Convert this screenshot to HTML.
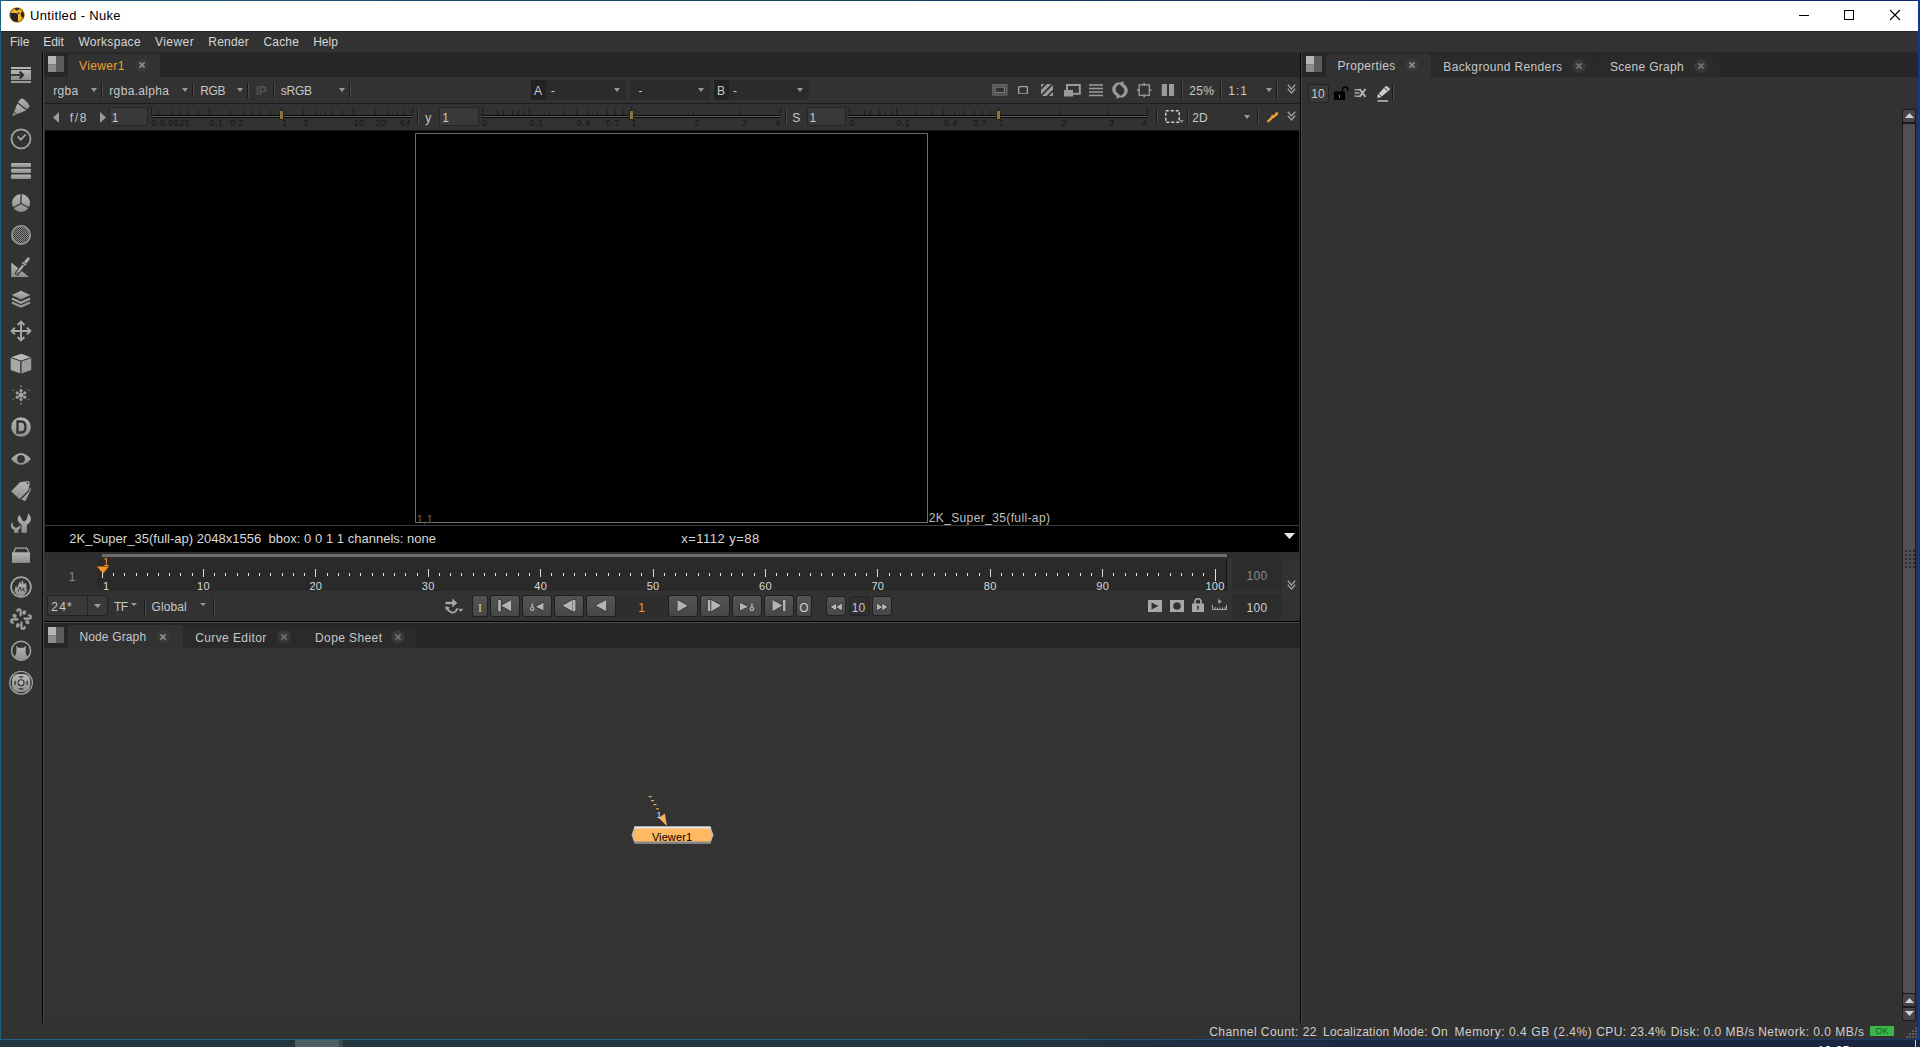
<!DOCTYPE html><html><head><meta charset="utf-8"><style>
html,body{margin:0;padding:0;width:1920px;height:1047px;overflow:hidden;background:#323232;}
body{position:relative;font-family:"Liberation Sans",sans-serif;}
div{position:absolute;box-sizing:border-box;}
.t{white-space:nowrap;line-height:1;}
</style></head><body>
<div style="left:0px;top:0px;width:1920px;height:1047px;background:#323232;"></div>
<div style="left:0px;top:0px;width:1920px;height:31px;background:#ffffff;"></div>
<div style="left:0px;top:0px;width:1920px;height:1px;background:linear-gradient(90deg,#1d5b7a 0%,#14405f 45%,#0c2f6a 75%,#0b2d7a 100%);"></div>
<div style="left:0px;top:1039px;width:1920px;height:8px;background:linear-gradient(90deg,#22363f 0%,#22363f 52%,#1b2743 73%,#1a2541 100%);"></div>
<div style="left:0px;top:1039px;width:1920px;height:1px;background:linear-gradient(90deg,#1f6484 0%,#1f6484 52%,#1d3a6a 73%,#1c3670 100%);"></div>
<div style="left:1915px;top:1040px;width:1px;height:7px;background:#c8ccd8;"></div>
<div class="t" style="left:1817.5px;top:1045.00px;font-size:12px;color:#ffffff;letter-spacing:0.5px">10:05</div>
<div style="left:295px;top:1040px;width:44px;height:7px;background:#4f5f66;"></div>
<div style="left:339px;top:1040px;width:4px;height:7px;background:#3a4a52;"></div>
<div style="left:0px;top:0px;width:1px;height:1040px;background:#1d6080;"></div>
<div style="left:1918px;top:0px;width:2px;height:1040px;background:#0b3a96;"></div>
<svg style="position:absolute;left:9px;top:7px;" width="16" height="16" viewBox="0 0 16 16"><circle cx="8" cy="8" r="7.8" fill="#f7b52c"/><circle cx="8" cy="8" r="6.9" fill="none" stroke="#3a3020" stroke-width="0.7"/><path d="M1.2 6H7.5L9 7.5V14.8Q5 15 3 12.8Q1.2 10.5 1.2 6Z" fill="#262626"/><path d="M5.2 1.3H10.8L8.8 3.6H7.4Z" fill="#262626"/><path d="M12.6 4.3L14.7 6Q15.3 8.5 14.8 10.5H12.6L11.6 7.5Z" fill="#262626"/><circle cx="9.6" cy="6.2" r="0.9" fill="#262626"/></svg>
<div class="t" style="left:30px;top:9.00px;font-size:13px;color:#000000;letter-spacing:0.33px">Untitled - Nuke</div>
<div style="left:1799px;top:15px;width:10px;height:1px;background:#000;"></div>
<div style="left:1844px;top:10px;width:10px;height:10px;background:transparent;border:1px solid #000"></div>
<svg style="position:absolute;left:1889px;top:9px;" width="12" height="12" viewBox="0 0 12 12"><path d="M1 1L11 11M11 1L1 11" stroke="#000" stroke-width="1.1"/></svg>
<div style="left:1px;top:31px;width:1917px;height:21px;background:#323232;"></div>
<div style="left:1px;top:31px;width:1917px;height:1px;background:#262626;"></div>
<div style="left:1px;top:52px;width:1917px;height:1px;background:#2c2c2c;"></div>
<div class="t" style="left:10px;top:36.00px;font-size:12px;color:#d6d6d6;letter-spacing:0px">File</div>
<div class="t" style="left:43.2px;top:36.00px;font-size:12px;color:#d6d6d6;letter-spacing:0px">Edit</div>
<div class="t" style="left:78.4px;top:36.00px;font-size:12px;color:#d6d6d6;letter-spacing:0.3px">Workspace</div>
<div class="t" style="left:155px;top:36.00px;font-size:12px;color:#d6d6d6;letter-spacing:0.45px">Viewer</div>
<div class="t" style="left:208.3px;top:36.00px;font-size:12px;color:#d6d6d6;letter-spacing:0.2px">Render</div>
<div class="t" style="left:263.4px;top:36.00px;font-size:12px;color:#d6d6d6;letter-spacing:0.2px">Cache</div>
<div class="t" style="left:313.2px;top:36.00px;font-size:12px;color:#d6d6d6;letter-spacing:0px">Help</div>
<div style="left:1px;top:52px;width:41px;height:971px;background:#323232;"></div>
<div style="left:42px;top:53px;width:1px;height:970px;background:#000;"></div>
<div style="left:43px;top:53px;width:1px;height:970px;background:#4a4a4a;"></div>
<svg width="0" height="0" style="position:absolute"><defs><linearGradient id="ig" x1="0" y1="0" x2="0" y2="1"><stop offset="0" stop-color="#b6b6b6"/><stop offset="1" stop-color="#8e8e8e"/></linearGradient><pattern id="dots" width="2" height="2" patternUnits="userSpaceOnUse"><rect width="2" height="2" fill="#8a8a8a"/><rect width="1" height="1" fill="#3a3a3a"/><rect x="1" y="1" width="1" height="1" fill="#3a3a3a"/></pattern></defs></svg>
<svg style="position:absolute;left:9px;top:63px;" width="24" height="24" viewBox="0 0 24 24"><rect x="2" y="4" width="20" height="2" fill="#b4b4b4"/><rect x="2" y="7" width="20" height="10" fill="url(#ig)"/><rect x="2" y="18" width="20" height="2" fill="#9a9a9a"/><path d="M2 12H13.5" stroke="#323232" stroke-width="1.8"/><path d="M10.6 8.6L14 12L10.6 15.4" fill="none" stroke="#323232" stroke-width="2.2"/></svg>
<svg style="position:absolute;left:9px;top:94.6px;" width="24" height="24" viewBox="0 0 24 24"><path d="M8.8 7.2L12.6 3.3Q17.6 5.2 20.8 11.2L17.8 14.5Z" fill="url(#ig)"/><path d="M8.4 8.4L17.2 15.6L8.3 19L3.2 21.2L5.2 16.6Z" fill="url(#ig)"/><path d="M5 16.9L7.6 19.1" stroke="#323232" stroke-width="0.9"/></svg>
<svg style="position:absolute;left:9px;top:127px;" width="24" height="24" viewBox="0 0 24 24"><circle cx="12" cy="11.9" r="9.5" fill="none" stroke="#a4a4a4" stroke-width="1.7"/><path d="M8.7 9.4L11.8 12.6L16.7 7.5" fill="none" stroke="#a8a8a8" stroke-width="1.8"/></svg>
<svg style="position:absolute;left:9px;top:159px;" width="24" height="24" viewBox="0 0 24 24"><rect x="2" y="4" width="20" height="4.2" rx="1.2" fill="url(#ig)"/><rect x="2" y="9.8" width="20" height="4.2" rx="1.2" fill="url(#ig)"/><rect x="2" y="15.6" width="20" height="4.3" rx="1.2" fill="url(#ig)"/></svg>
<svg style="position:absolute;left:9px;top:191px;" width="24" height="24" viewBox="0 0 24 24"><circle cx="12" cy="12" r="9" fill="url(#ig)"/><path d="M12 3V12.5M12 12.5L4.2 16.8M12 12.5L19.8 16.8" stroke="#323232" stroke-width="1.3"/></svg>
<svg style="position:absolute;left:9px;top:223px;" width="24" height="24" viewBox="0 0 24 24"><circle cx="12" cy="12" r="9.2" fill="url(#dots)" stroke="#9a9a9a" stroke-width="1.6"/></svg>
<svg style="position:absolute;left:9px;top:255.5px;" width="24" height="24" viewBox="0 0 24 24"><path d="M2.25 6.5V20.9H20Z" fill="url(#ig)"/><path d="M8.1 17.3L18.6 3.5" stroke="#323232" stroke-width="4.4" stroke-linecap="round"/><path d="M8.1 17.3L18.6 3.5" stroke="#a8a8a8" stroke-width="2.4" stroke-linecap="round"/><path d="M12.9 6.1L17.3 9.5" stroke="#323232" stroke-width="3.6"/><path d="M13.2 6.4L17 9.2" stroke="#a8a8a8" stroke-width="1.8"/><path d="M16.8 6L19.2 2.8" stroke="#a8a8a8" stroke-width="3" stroke-linecap="round"/><circle cx="8.4" cy="16.9" r="0.8" fill="#323232"/></svg>
<svg style="position:absolute;left:9px;top:288px;" width="24" height="24" viewBox="0 0 24 24"><path d="M12 2.8L21.3 7.1L12 11.4L2.7 7.1Z" fill="url(#ig)"/><path d="M2.9 10.6L12 14.8L21.1 10.6" fill="none" stroke="#a0a0a0" stroke-width="2.2"/><path d="M2.9 14.4L12 18.6L21.1 14.4" fill="none" stroke="#989898" stroke-width="2.2"/></svg>
<svg style="position:absolute;left:9px;top:319px;" width="24" height="24" viewBox="0 0 24 24"><path d="M12 3V21M3 12H21" stroke="#a8a8a8" stroke-width="1.9"/><path d="M8.6 6L12 2.6L15.4 6M8.6 18L12 21.4L15.4 18M6 8.6L2.6 12L6 15.4M18 8.6L21.4 12L18 15.4" fill="none" stroke="#a8a8a8" stroke-width="1.9"/></svg>
<svg style="position:absolute;left:9px;top:351px;" width="24" height="24" viewBox="0 0 24 24"><path d="M1.7 6.2L12.5 2.7L22.2 6.4L11.8 10Z" fill="#b8b8b8"/><path d="M1.7 6.6L11.5 10.3V22.4L1.7 19Z" fill="#a8a8a8"/><path d="M12.3 10.3L22.2 6.8V18.9L12.3 22.4Z" fill="#9c9c9c"/><path d="M1.7 6.5L11.9 10.1L22.2 6.6M11.9 10.1V22.4" fill="none" stroke="#2e2e2e" stroke-width="0.9"/></svg>
<svg style="position:absolute;left:9px;top:383px;" width="24" height="24" viewBox="0 0 24 24"><circle cx="12" cy="12" r="2.5" fill="#a8a8a8"/><circle cx="12" cy="7.6" r="1.6" fill="#a0a0a0"/><circle cx="12" cy="16.4" r="1.6" fill="#a0a0a0"/><circle cx="8.2" cy="9.8" r="1.6" fill="#a0a0a0"/><circle cx="15.8" cy="9.8" r="1.6" fill="#a0a0a0"/><circle cx="8.2" cy="14.2" r="1.6" fill="#a0a0a0"/><circle cx="15.8" cy="14.2" r="1.6" fill="#a0a0a0"/><rect x="11.2" y="2.6" width="1.6" height="1.6" fill="#888"/><rect x="11.2" y="19.8" width="1.6" height="1.6" fill="#888"/><circle cx="4.2" cy="7.3" r="0.8" fill="#888"/><circle cx="19.8" cy="7.3" r="0.8" fill="#888"/><circle cx="4.2" cy="16.7" r="0.8" fill="#888"/><circle cx="19.8" cy="16.7" r="0.8" fill="#888"/></svg>
<svg style="position:absolute;left:9px;top:415px;" width="24" height="24" viewBox="0 0 24 24"><circle cx="12" cy="12" r="9.8" fill="url(#ig)"/><path d="M8.5 6.5H12.2Q16.5 6.5 16.5 12Q16.5 17.5 12.2 17.5H8.5Z" fill="none" stroke="#323232" stroke-width="2.4"/></svg>
<svg style="position:absolute;left:9px;top:447px;" width="24" height="24" viewBox="0 0 24 24"><path d="M2 12Q12 0.5 22 12Q12 23.5 2 12Z" fill="url(#ig)"/><circle cx="12" cy="12" r="3.9" fill="#323232"/></svg>
<svg style="position:absolute;left:9px;top:479px;" width="24" height="24" viewBox="0 0 24 24"><path d="M2.15 12.2L11 3.3L19.6 1.9L20.8 3.9L19.3 11.6L10.5 20.2Z" fill="url(#ig)"/><path d="M21 8.2L21.9 10.7L16.5 21.9L12.2 20.5L20 12.6Z" fill="#a0a0a0"/><circle cx="18.5" cy="3.9" r="1" fill="#323232"/></svg>
<svg style="position:absolute;left:9px;top:511px;" width="24" height="24" viewBox="0 0 24 24"><path d="M10.2 4Q8.2 6.5 8.8 9.5Q9.6 12 12.5 13.8V21.7H17.9V13.8Q21.2 12 21.9 9Q22.3 5.5 19.3 2.2L18.5 6Q17.5 10 15.3 10.2Q13 10 12 6.5Z" fill="url(#ig)"/><path d="M3.3 11.1Q1.5 13.5 2 16Q2.8 18 5 19V21.7H9.3V19Q11 18 11.5 16.5L11 13.7Q10 16.5 7 16.8Q4.5 16.5 3.8 14Z" fill="url(#ig)"/></svg>
<svg style="position:absolute;left:9px;top:543px;" width="24" height="24" viewBox="0 0 24 24"><path d="M4.6 9.6L6.6 5.2H17.8L19.8 9.6" fill="none" stroke="#a8a8a8" stroke-width="1.2"/><rect x="3" y="9.3" width="18" height="10.6" fill="url(#ig)"/></svg>
<svg style="position:absolute;left:9px;top:575px;" width="24" height="24" viewBox="0 0 24 24"><circle cx="12" cy="12" r="9.9" fill="none" stroke="#a4a4a4" stroke-width="1.7"/><path d="M5.5 16Q6 12.5 7.3 10.5Q7.5 12.5 8.5 13Q8.8 9 11.5 6Q11 8.5 12.3 9.5Q13.2 7 12.8 5Q15 6.5 14.5 9.5Q16 8.5 16.5 7.5Q18 10 17.5 13.5Q17.2 14.5 18 15.5Q17 19.5 13 21.2H11Q7 20.5 5.5 16Z" fill="url(#ig)"/><path d="M9.3 16.5Q9.5 13.5 11.5 12Q11 14.5 12.5 16Q13.5 13 15 12.8Q14 15.5 15.5 17" fill="none" stroke="#323232" stroke-width="0.9"/></svg>
<svg style="position:absolute;left:9px;top:607px;" width="24" height="24" viewBox="0 0 24 24"><g id="sa"><path d="M11.6 9.5V4Q11.6 2.2 9.9 2.2Q8.3 2.2 8.3 4V4.8" fill="none" stroke="#a4a4a4" stroke-width="2.1"/><ellipse cx="15.2" cy="5.6" rx="1.9" ry="2.3" fill="#9c9c9c" transform="rotate(30 15.2 5.6)"/></g><use href="#sa" transform="rotate(90 12 12)"/><use href="#sa" transform="rotate(180 12 12)"/><use href="#sa" transform="rotate(270 12 12)"/><rect x="9.6" y="9.6" width="4.8" height="4.8" fill="#323232"/></svg>
<svg style="position:absolute;left:9px;top:639px;" width="24" height="24" viewBox="0 0 24 24"><circle cx="12.1" cy="11.8" r="9.5" fill="none" stroke="#a4a4a4" stroke-width="1.4"/><path d="M7.4 6.8L9.3 8.8H14.9L16.8 6.4L16.6 13Q16.8 15.5 19.2 18Q16.5 21.3 12.1 21.3Q7.7 21.3 5 18Q7.3 15.5 7.4 13Z" fill="url(#ig)"/></svg>
<svg style="position:absolute;left:9px;top:671px;" width="24" height="24" viewBox="0 0 24 24"><circle cx="12.1" cy="11.7" r="11.3" fill="none" stroke="#a4a4a4" stroke-width="1.3"/><rect x="3" y="2.9" width="18.2" height="18" rx="6.5" fill="url(#ig)"/><rect x="10" y="5.2" width="4.2" height="1.3" fill="#323232"/><rect x="10" y="17.2" width="4.2" height="1.3" fill="#323232"/><rect x="5.4" y="9.7" width="1.3" height="4.2" fill="#323232"/><rect x="17.5" y="9.7" width="1.3" height="4.2" fill="#323232"/><circle cx="12.1" cy="11.8" r="3" fill="#b0b0b0" stroke="#323232" stroke-width="1.1"/></svg>
<div style="left:44px;top:53px;width:1256px;height:24px;background:#262626;"></div>
<svg style="position:absolute;left:48px;top:56px;" width="16" height="16" viewBox="0 0 16 16"><rect x="0" y="0" width="8" height="8.5" fill="#b6b6b6"/><rect x="0" y="8.5" width="8" height="7.5" fill="#8c8c8c"/><rect x="8" y="0" width="8" height="16" fill="#5c5c5c"/></svg>
<div style="left:68px;top:54px;width:92px;height:23px;background:#323232;border-radius:3px 3px 0 0"></div>
<div class="t" style="left:79.1px;top:60.00px;font-size:12px;color:#f0a030;letter-spacing:0.35px">Viewer1</div>
<svg style="position:absolute;left:135px;top:58px;" width="14" height="14" viewBox="0 0 14 14"><circle cx="7" cy="7" r="6.8" fill="#393939"/><path d="M4.4 4.4L9.6 9.6M9.6 4.4L4.4 9.6" stroke="#8c8c8c" stroke-width="1.8"/></svg>
<div style="left:44px;top:77px;width:1256px;height:26px;background:#323232;"></div>
<div style="left:45px;top:103px;width:1254px;height:1px;background:#1e1e1e;"></div>
<div style="left:44px;top:104px;width:1256px;height:26px;background:#323232;"></div>
<div class="t" style="left:53.2px;top:85.00px;font-size:12px;color:#c8c8c8;letter-spacing:0.3px">rgba</div>
<svg style="position:absolute;left:91px;top:88px;" width="6" height="4" viewBox="0 0 6 4"><path d="M0 0H6L3.0 4Z" fill="#999"/></svg>
<div style="left:101px;top:83px;width:1px;height:15px;background:#1a1a1a;"></div>
<div style="left:102px;top:83px;width:1px;height:15px;background:#4a4a4a;"></div>
<div class="t" style="left:109.3px;top:85.00px;font-size:12px;color:#c8c8c8;letter-spacing:0.33px">rgba.alpha</div>
<svg style="position:absolute;left:182px;top:88px;" width="6" height="4" viewBox="0 0 6 4"><path d="M0 0H6L3.0 4Z" fill="#999"/></svg>
<div style="left:192px;top:83px;width:1px;height:15px;background:#1a1a1a;"></div>
<div style="left:193px;top:83px;width:1px;height:15px;background:#4a4a4a;"></div>
<div class="t" style="left:200.3px;top:85.00px;font-size:12px;color:#c8c8c8;letter-spacing:-0.4px">RGB</div>
<svg style="position:absolute;left:237px;top:88px;" width="6" height="4" viewBox="0 0 6 4"><path d="M0 0H6L3.0 4Z" fill="#999"/></svg>
<div style="left:247px;top:83px;width:1px;height:15px;background:#1a1a1a;"></div>
<div style="left:248px;top:83px;width:1px;height:15px;background:#4a4a4a;"></div>
<div class="t" style="left:255.7px;top:85.00px;font-size:12px;color:#525252;font-weight:bold;letter-spacing:-0.3px">IP</div>
<div style="left:273px;top:83px;width:1px;height:15px;background:#1a1a1a;"></div>
<div style="left:274px;top:83px;width:1px;height:15px;background:#4a4a4a;"></div>
<div class="t" style="left:280.7px;top:85.00px;font-size:12px;color:#c8c8c8;letter-spacing:-0.2px">sRGB</div>
<svg style="position:absolute;left:339px;top:88px;" width="6" height="4" viewBox="0 0 6 4"><path d="M0 0H6L3.0 4Z" fill="#999"/></svg>
<div style="left:349px;top:83px;width:1px;height:15px;background:#1a1a1a;"></div>
<div style="left:350px;top:83px;width:1px;height:15px;background:#4a4a4a;"></div>
<div style="left:546px;top:80px;width:80px;height:20px;background:#2b2b2b;"></div>
<div style="left:531px;top:80px;width:15px;height:20px;background:#222222;"></div>
<div class="t" style="left:534px;top:85.00px;font-size:12px;color:#c8c8c8;">A</div>
<div class="t" style="left:550.7px;top:85.00px;font-size:12px;color:#c8c8c8;">-</div>
<svg style="position:absolute;left:614px;top:88px;" width="6" height="4" viewBox="0 0 6 4"><path d="M0 0H6L3.0 4Z" fill="#999"/></svg>
<div style="left:630px;top:80px;width:80px;height:20px;background:#2b2b2b;"></div>
<div class="t" style="left:638.5px;top:85.00px;font-size:12px;color:#c8c8c8;">-</div>
<svg style="position:absolute;left:698px;top:88px;" width="6" height="4" viewBox="0 0 6 4"><path d="M0 0H6L3.0 4Z" fill="#999"/></svg>
<div style="left:729px;top:80px;width:80px;height:20px;background:#2b2b2b;"></div>
<div style="left:714px;top:80px;width:15px;height:20px;background:#222222;"></div>
<div class="t" style="left:717px;top:85.00px;font-size:12px;color:#c8c8c8;">B</div>
<div class="t" style="left:733px;top:85.00px;font-size:12px;color:#c8c8c8;">-</div>
<svg style="position:absolute;left:797px;top:88px;" width="6" height="4" viewBox="0 0 6 4"><path d="M0 0H6L3.0 4Z" fill="#999"/></svg>
<svg style="position:absolute;left:992px;top:84px;" width="16" height="12" viewBox="0 0 16 12"><rect x="0" y="0" width="15.7" height="11.75" fill="#5e5e5e"/><rect x="2" y="2" width="11.7" height="7.75" fill="#444"/><rect x="3.2" y="3.2" width="9.3" height="5.4" fill="#333" stroke="#7c7c7c" stroke-width="1.1"/></svg>
<svg style="position:absolute;left:1018px;top:85.75px;" width="10" height="8.5" viewBox="0 0 10 8.5"><rect x="0.65" y="0.65" width="8.7" height="7.2" rx="0.8" fill="none" stroke="#a4a4a4" stroke-width="1.3"/></svg>
<svg style="position:absolute;left:1041px;top:84px;" width="12" height="12" viewBox="0 0 12 12"><path d="M0 0H3.5L0 3.5Z M0 6L6 0H10.5L0 10.5Z M12 1V5.5L5.5 12H1Z M12 8V12H8Z" fill="#9a9a9a"/></svg>
<svg style="position:absolute;left:1064px;top:84px;" width="17" height="13" viewBox="0 0 17 13"><rect x="3" y="1" width="12.8" height="8.8" fill="none" stroke="#9a9a9a" stroke-width="2"/><rect x="0" y="6" width="9" height="6.5" fill="#9a9a9a"/></svg>
<svg style="position:absolute;left:1089px;top:84px;" width="14" height="13" viewBox="0 0 14 13"><rect x="0" y="0.2" width="14" height="1.6" fill="#9a9a9a"/><rect x="0" y="3.7" width="14" height="1.6" fill="#9a9a9a"/><rect x="0" y="7.2" width="14" height="1.6" fill="#9a9a9a"/><rect x="0" y="10.7" width="14" height="1.6" fill="#9a9a9a"/></svg>
<svg style="position:absolute;left:1108px;top:80px;" width="24" height="20" viewBox="0 0 24 20"><g id="rf"><path d="M11 2Q4.5 3.5 4.2 9.5Q4.5 14.5 9.5 16.5L9.8 13.5Q7.6 11.8 7.6 9.5Q7.8 6 11 4.6Z" fill="#9a9a9a"/><path d="M8.3 12L13.8 16.8L8.5 18.8Z" fill="#9a9a9a"/></g><use href="#rf" transform="rotate(180 12 10)"/></svg>
<svg style="position:absolute;left:1136px;top:82px;" width="16" height="16" viewBox="0 0 16 16"><rect x="3.15" y="2.9" width="10.2" height="10.4" fill="none" stroke="#9a9a9a" stroke-width="1.3"/><rect x="7.3" y="1" width="1.8" height="2.5" fill="#9a9a9a"/><rect x="7.3" y="12.8" width="1.8" height="2.5" fill="#9a9a9a"/><rect x="1" y="7.2" width="2.5" height="1.8" fill="#9a9a9a"/><rect x="12.9" y="7.2" width="2.5" height="1.8" fill="#9a9a9a"/></svg>
<svg style="position:absolute;left:1161px;top:84px;" width="14" height="12" viewBox="0 0 14 12"><rect x="0.75" y="0" width="5.25" height="12" fill="#9a9a9a"/><rect x="8" y="0" width="5" height="12" fill="#9a9a9a"/></svg>
<div style="left:1181px;top:82px;width:1px;height:17px;background:#1a1a1a;"></div>
<div style="left:1182px;top:82px;width:1px;height:17px;background:#4a4a4a;"></div>
<div class="t" style="left:1189.2px;top:85.00px;font-size:12px;color:#c8c8c8;letter-spacing:0.3px">25%</div>
<svg style="position:absolute;left:1211px;top:90px;" width="4" height="3" viewBox="0 0 4 3"><path d="M0 0H4L2.0 3Z" fill="#888"/></svg>
<div style="left:1220px;top:82px;width:1px;height:17px;background:#1a1a1a;"></div>
<div style="left:1221px;top:82px;width:1px;height:17px;background:#4a4a4a;"></div>
<div class="t" style="left:1228.3px;top:85.00px;font-size:12px;color:#c8c8c8;letter-spacing:1px">1:1</div>
<svg style="position:absolute;left:1265.8px;top:88px;" width="6" height="4" viewBox="0 0 6 4"><path d="M0 0H6L3.0 4Z" fill="#999"/></svg>
<div style="left:1276px;top:82px;width:1px;height:17px;background:#1a1a1a;"></div>
<div style="left:1277px;top:82px;width:1px;height:17px;background:#4a4a4a;"></div>
<svg style="position:absolute;left:1287px;top:84px;" width="9" height="12" viewBox="0 0 9 12"><path d="M0.8 0.8L4.5 5L8.2 0.8M0.8 4.8L4.5 9L8.2 4.8" fill="none" stroke="#a0a0a0" stroke-width="1.3"/></svg>
<svg style="position:absolute;left:52.7px;top:111.8px;" width="6" height="11" viewBox="0 0 6 11"><path d="M6 0V11L0 5.5Z" fill="#9a9a9a"/></svg>
<div class="t" style="left:69.8px;top:112.00px;font-size:12px;color:#c8c8c8;letter-spacing:1.6px">f/8</div>
<svg style="position:absolute;left:99.5px;top:111.8px;" width="6" height="11" viewBox="0 0 6 11"><path d="M0 0V11L6 5.5Z" fill="#9a9a9a"/></svg>
<div style="left:108.7px;top:107.3px;width:39px;height:19px;background:#393939;border:1px solid #252525;border-radius:2px"></div>
<div class="t" style="left:111.7px;top:112.00px;font-size:12px;color:#c8c8c8;">1</div>
<div style="left:151px;top:107px;width:1px;height:8px;background:#1e1e1e;"></div>
<div style="left:158px;top:110px;width:1px;height:5px;background:#1e1e1e;"></div>
<div style="left:171px;top:110px;width:1px;height:5px;background:#1e1e1e;"></div>
<div style="left:180px;top:110px;width:1px;height:5px;background:#1e1e1e;"></div>
<div style="left:187px;top:110px;width:1px;height:5px;background:#1e1e1e;"></div>
<div style="left:198px;top:110px;width:1px;height:5px;background:#1e1e1e;"></div>
<div style="left:209px;top:107px;width:1px;height:8px;background:#1e1e1e;"></div>
<div style="left:230px;top:110px;width:1px;height:5px;background:#1e1e1e;"></div>
<div style="left:243px;top:110px;width:1px;height:5px;background:#1e1e1e;"></div>
<div style="left:252px;top:110px;width:1px;height:5px;background:#1e1e1e;"></div>
<div style="left:259px;top:110px;width:1px;height:5px;background:#1e1e1e;"></div>
<div style="left:270px;top:110px;width:1px;height:5px;background:#1e1e1e;"></div>
<div style="left:281px;top:107px;width:1px;height:8px;background:#1e1e1e;"></div>
<div style="left:303px;top:110px;width:1px;height:5px;background:#1e1e1e;"></div>
<div style="left:315px;top:110px;width:1px;height:5px;background:#1e1e1e;"></div>
<div style="left:325px;top:110px;width:1px;height:5px;background:#1e1e1e;"></div>
<div style="left:332px;top:110px;width:1px;height:5px;background:#1e1e1e;"></div>
<div style="left:342px;top:110px;width:1px;height:5px;background:#1e1e1e;"></div>
<div style="left:353px;top:107px;width:1px;height:8px;background:#1e1e1e;"></div>
<div style="left:375px;top:110px;width:1px;height:5px;background:#1e1e1e;"></div>
<div style="left:388px;top:110px;width:1px;height:5px;background:#1e1e1e;"></div>
<div style="left:397px;top:110px;width:1px;height:5px;background:#1e1e1e;"></div>
<div style="left:404px;top:110px;width:1px;height:5px;background:#1e1e1e;"></div>
<div style="left:412px;top:107px;width:1px;height:8px;background:#1e1e1e;"></div>
<div style="left:151.25px;top:115px;width:261.75px;height:1px;background:#0a0a0a;"></div>
<div style="left:151.25px;top:116px;width:261.75px;height:1px;background:#5e5e5e;"></div>
<div style="left:151.25px;top:117px;width:261.75px;height:1px;background:#0a0a0a;"></div>
<div class="t" style="left:151.25px;top:119.00px;font-size:9px;color:#161616;letter-spacing:0.5px">0.0.0625</div>
<div class="t" style="left:209.2px;top:119.00px;font-size:9px;color:#161616;letter-spacing:0.5px">0.1</div>
<div class="t" style="left:230px;top:119.00px;font-size:9px;color:#161616;letter-spacing:0.5px">0.2</div>
<div class="t" style="left:282px;top:119.00px;font-size:9px;color:#161616;letter-spacing:0.5px">1</div>
<div class="t" style="left:303.3px;top:119.00px;font-size:9px;color:#161616;letter-spacing:0.5px">2</div>
<div class="t" style="left:353.75px;top:119.00px;font-size:9px;color:#161616;letter-spacing:0.5px">10</div>
<div class="t" style="left:375.4px;top:119.00px;font-size:9px;color:#161616;letter-spacing:0.5px">20</div>
<div class="t" style="left:400px;top:119.00px;font-size:9px;color:#161616;letter-spacing:0.5px">64</div>
<div style="left:279.3px;top:110px;width:4.6px;height:9.5px;background:#8b7440;border:1px solid #2a2414"></div>
<div style="left:417px;top:109px;width:1px;height:15px;background:#1a1a1a;"></div>
<div style="left:418px;top:109px;width:1px;height:15px;background:#4a4a4a;"></div>
<div class="t" style="left:425.3px;top:112.00px;font-size:12px;color:#c8c8c8;letter-spacing:0px">y</div>
<div style="left:439.3px;top:107.3px;width:39.5px;height:19px;background:#393939;border:1px solid #252525;border-radius:2px"></div>
<div class="t" style="left:442.3px;top:112.00px;font-size:12px;color:#c8c8c8;">1</div>
<div style="left:482px;top:107px;width:1px;height:8px;background:#1e1e1e;"></div>
<div style="left:497px;top:110px;width:1px;height:5px;background:#1e1e1e;"></div>
<div style="left:503px;top:110px;width:1px;height:5px;background:#1e1e1e;"></div>
<div style="left:512px;top:110px;width:1px;height:5px;background:#1e1e1e;"></div>
<div style="left:518px;top:110px;width:1px;height:5px;background:#1e1e1e;"></div>
<div style="left:524px;top:110px;width:1px;height:5px;background:#1e1e1e;"></div>
<div style="left:529px;top:107px;width:1px;height:8px;background:#1e1e1e;"></div>
<div style="left:549px;top:110px;width:1px;height:5px;background:#1e1e1e;"></div>
<div style="left:564px;top:110px;width:1px;height:5px;background:#1e1e1e;"></div>
<div style="left:576px;top:110px;width:1px;height:5px;background:#1e1e1e;"></div>
<div style="left:587px;top:110px;width:1px;height:5px;background:#1e1e1e;"></div>
<div style="left:597px;top:110px;width:1px;height:5px;background:#1e1e1e;"></div>
<div style="left:607px;top:110px;width:1px;height:5px;background:#1e1e1e;"></div>
<div style="left:615px;top:110px;width:1px;height:5px;background:#1e1e1e;"></div>
<div style="left:623px;top:110px;width:1px;height:5px;background:#1e1e1e;"></div>
<div style="left:631px;top:107px;width:1px;height:8px;background:#1e1e1e;"></div>
<div style="left:693px;top:110px;width:1px;height:5px;background:#1e1e1e;"></div>
<div style="left:740px;top:110px;width:1px;height:5px;background:#1e1e1e;"></div>
<div style="left:780px;top:107px;width:1px;height:8px;background:#1e1e1e;"></div>
<div style="left:482.2px;top:115px;width:299.3px;height:1px;background:#0a0a0a;"></div>
<div style="left:482.2px;top:116px;width:299.3px;height:1px;background:#5e5e5e;"></div>
<div style="left:482.2px;top:117px;width:299.3px;height:1px;background:#0a0a0a;"></div>
<div class="t" style="left:482.2px;top:119.00px;font-size:9px;color:#161616;letter-spacing:0.5px">0</div>
<div class="t" style="left:529.4444282429156px;top:119.00px;font-size:9px;color:#161616;letter-spacing:0.5px">0.1</div>
<div class="t" style="left:576.6888564858311px;top:119.00px;font-size:9px;color:#161616;letter-spacing:0.5px">0.4</div>
<div class="t" style="left:605.897007964191px;top:119.00px;font-size:9px;color:#161616;letter-spacing:0.5px">0.7</div>
<div class="t" style="left:631.6px;top:119.00px;font-size:9px;color:#161616;letter-spacing:0.5px">1</div>
<div class="t" style="left:694.4835062185405px;top:119.00px;font-size:9px;color:#161616;letter-spacing:0.5px">2</div>
<div class="t" style="left:741.9683906507903px;top:119.00px;font-size:9px;color:#161616;letter-spacing:0.5px">3</div>
<div class="t" style="left:775.0px;top:119.00px;font-size:9px;color:#161616;letter-spacing:0.5px">4</div>
<div style="left:629.4px;top:110px;width:4.6px;height:9.5px;background:#8b7440;border:1px solid #2a2414"></div>
<div style="left:784.5px;top:109px;width:1px;height:15px;background:#1a1a1a;"></div>
<div style="left:785.5px;top:109px;width:1px;height:15px;background:#4a4a4a;"></div>
<div class="t" style="left:792.3px;top:112.00px;font-size:12px;color:#c8c8c8;">S</div>
<div style="left:806.5px;top:107.3px;width:39px;height:19px;background:#393939;border:1px solid #252525;border-radius:2px"></div>
<div class="t" style="left:809.5px;top:112.00px;font-size:12px;color:#c8c8c8;">1</div>
<div style="left:849px;top:107px;width:1px;height:8px;background:#1e1e1e;"></div>
<div style="left:864px;top:110px;width:1px;height:5px;background:#1e1e1e;"></div>
<div style="left:870px;top:110px;width:1px;height:5px;background:#1e1e1e;"></div>
<div style="left:879px;top:110px;width:1px;height:5px;background:#1e1e1e;"></div>
<div style="left:885px;top:110px;width:1px;height:5px;background:#1e1e1e;"></div>
<div style="left:891px;top:110px;width:1px;height:5px;background:#1e1e1e;"></div>
<div style="left:896px;top:107px;width:1px;height:8px;background:#1e1e1e;"></div>
<div style="left:916px;top:110px;width:1px;height:5px;background:#1e1e1e;"></div>
<div style="left:931px;top:110px;width:1px;height:5px;background:#1e1e1e;"></div>
<div style="left:943px;top:110px;width:1px;height:5px;background:#1e1e1e;"></div>
<div style="left:954px;top:110px;width:1px;height:5px;background:#1e1e1e;"></div>
<div style="left:964px;top:110px;width:1px;height:5px;background:#1e1e1e;"></div>
<div style="left:974px;top:110px;width:1px;height:5px;background:#1e1e1e;"></div>
<div style="left:982px;top:110px;width:1px;height:5px;background:#1e1e1e;"></div>
<div style="left:990px;top:110px;width:1px;height:5px;background:#1e1e1e;"></div>
<div style="left:998px;top:107px;width:1px;height:8px;background:#1e1e1e;"></div>
<div style="left:1060px;top:110px;width:1px;height:5px;background:#1e1e1e;"></div>
<div style="left:1107px;top:110px;width:1px;height:5px;background:#1e1e1e;"></div>
<div style="left:1147px;top:107px;width:1px;height:8px;background:#1e1e1e;"></div>
<div style="left:849.2px;top:115px;width:299.29999999999995px;height:1px;background:#0a0a0a;"></div>
<div style="left:849.2px;top:116px;width:299.29999999999995px;height:1px;background:#5e5e5e;"></div>
<div style="left:849.2px;top:117px;width:299.29999999999995px;height:1px;background:#0a0a0a;"></div>
<div class="t" style="left:849.2px;top:119.00px;font-size:9px;color:#161616;letter-spacing:0.5px">0</div>
<div class="t" style="left:896.4444282429156px;top:119.00px;font-size:9px;color:#161616;letter-spacing:0.5px">0.1</div>
<div class="t" style="left:943.6888564858313px;top:119.00px;font-size:9px;color:#161616;letter-spacing:0.5px">0.4</div>
<div class="t" style="left:972.897007964191px;top:119.00px;font-size:9px;color:#161616;letter-spacing:0.5px">0.7</div>
<div class="t" style="left:998.6px;top:119.00px;font-size:9px;color:#161616;letter-spacing:0.5px">1</div>
<div class="t" style="left:1061.4835062185405px;top:119.00px;font-size:9px;color:#161616;letter-spacing:0.5px">2</div>
<div class="t" style="left:1108.9683906507903px;top:119.00px;font-size:9px;color:#161616;letter-spacing:0.5px">3</div>
<div class="t" style="left:1142.0px;top:119.00px;font-size:9px;color:#161616;letter-spacing:0.5px">4</div>
<div style="left:996.4px;top:110px;width:4.6px;height:9.5px;background:#8b7440;border:1px solid #2a2414"></div>
<div style="left:1156px;top:109px;width:1px;height:15px;background:#1a1a1a;"></div>
<div style="left:1157px;top:109px;width:1px;height:15px;background:#4a4a4a;"></div>
<svg style="position:absolute;left:1164.7px;top:110px;" width="19" height="14" viewBox="0 0 19 14"><rect x="0.75" y="0.75" width="13.5" height="11.5" fill="none" stroke="#d0d0d0" stroke-width="1.5" stroke-dasharray="3 2"/><path d="M14 10H19L16.5 13Z" fill="#888"/></svg>
<div style="left:1186.5px;top:109px;width:1px;height:15px;background:#1a1a1a;"></div>
<div style="left:1187.5px;top:109px;width:1px;height:15px;background:#4a4a4a;"></div>
<div class="t" style="left:1192.2px;top:112.00px;font-size:12px;color:#c8c8c8;letter-spacing:0.2px">2D</div>
<svg style="position:absolute;left:1244px;top:115px;" width="6" height="4" viewBox="0 0 6 4"><path d="M0 0H6L3.0 4Z" fill="#999"/></svg>
<div style="left:1256.5px;top:109px;width:1px;height:15px;background:#1a1a1a;"></div>
<div style="left:1257.5px;top:109px;width:1px;height:15px;background:#4a4a4a;"></div>
<svg style="position:absolute;left:1266px;top:110px;" width="13" height="13" viewBox="0 0 13 13"><path d="M2.2 11.3L7 6.5" stroke="#f5a033" stroke-width="2.3" stroke-linecap="round"/><path d="M5.6 5.2L8.3 7.9" stroke="#f5a033" stroke-width="1.7"/><path d="M7.4 5.6L10 2.6Q11 1.6 12 2.6Q12.8 3.6 11.9 4.5L9 7.2Z" fill="#f5a033"/></svg>
<svg style="position:absolute;left:1287px;top:111px;" width="9" height="12" viewBox="0 0 9 12"><path d="M0.8 0.8L4.5 5L8.2 0.8M0.8 4.8L4.5 9L8.2 4.8" fill="none" stroke="#a0a0a0" stroke-width="1.3"/></svg>
<div style="left:45px;top:130px;width:1254px;height:1px;background:#141414;"></div>
<div style="left:45px;top:131px;width:1254px;height:394px;background:#000;"></div>
<div style="left:45px;top:525px;width:1254px;height:1px;background:#3c3c3c;"></div>
<div style="left:45px;top:526px;width:1254px;height:26px;background:#000;"></div>
<div style="left:44px;top:552px;width:1256px;height:70px;background:#323232;"></div>
<div style="left:44px;top:621px;width:1256px;height:1px;background:#000;"></div>
<div style="left:45px;top:622px;width:1254px;height:1px;background:#4a4a4a;"></div>
<div style="left:415px;top:133px;width:513px;height:390px;background:transparent;border:1px solid #6c6c6c"></div>
<div class="t" style="left:417px;top:515.00px;font-size:10px;color:#6c6c6c;letter-spacing:0.8px">1,1</div>
<div class="t" style="left:928.7px;top:512.00px;font-size:12px;color:#c0c0c0;letter-spacing:0.38px">2K_Super_35(full-ap)</div>
<div class="t" style="left:69.2px;top:532.00px;font-size:13px;color:#d8d8d8;letter-spacing:0.02px">2K_Super_35(full-ap) 2048x1556&nbsp; bbox: 0 0 1 1 channels: none</div>
<div class="t" style="left:681.2px;top:532.00px;font-size:13px;color:#d8d8d8;letter-spacing:0.47px">x=1112 y=88</div>
<svg style="position:absolute;left:1284px;top:533px;" width="11" height="6" viewBox="0 0 11 6"><path d="M0 0H11L5.5 6Z" fill="#e8e8e8"/></svg>
<div style="left:44px;top:552px;width:1256px;height:7px;background:#2e2e2e;"></div>
<div style="left:102px;top:554px;width:1125px;height:3px;background:#6c6c6c;"></div>
<div style="left:47px;top:559px;width:50px;height:32px;background:#2f2f2f;"></div>
<div class="t" style="left:-128px;width:400px;text-align:center;top:571.00px;font-size:12px;color:#8a8a8a;">1</div>
<div style="left:97px;top:559px;width:1130px;height:32px;background:#2a2a2a;"></div>
<div style="left:1226px;top:559px;width:1px;height:32px;background:#111;"></div>
<div style="left:102px;top:568px;width:1px;height:10px;background:#e0e0e0;"></div>
<div style="left:113px;top:573px;width:1px;height:3px;background:#e8e8e8;"></div>
<div style="left:124px;top:573px;width:1px;height:3px;background:#e8e8e8;"></div>
<div style="left:136px;top:573px;width:1px;height:3px;background:#e8e8e8;"></div>
<div style="left:147px;top:573px;width:1px;height:3px;background:#e8e8e8;"></div>
<div style="left:158px;top:573px;width:1px;height:3px;background:#e8e8e8;"></div>
<div style="left:169px;top:573px;width:1px;height:3px;background:#e8e8e8;"></div>
<div style="left:180px;top:573px;width:1px;height:3px;background:#e8e8e8;"></div>
<div style="left:192px;top:573px;width:1px;height:3px;background:#e8e8e8;"></div>
<div style="left:203px;top:569px;width:1px;height:8px;background:#d8d8d8;"></div>
<div style="left:214px;top:573px;width:1px;height:3px;background:#e8e8e8;"></div>
<div style="left:225px;top:573px;width:1px;height:3px;background:#e8e8e8;"></div>
<div style="left:237px;top:573px;width:1px;height:3px;background:#e8e8e8;"></div>
<div style="left:248px;top:573px;width:1px;height:3px;background:#e8e8e8;"></div>
<div style="left:259px;top:573px;width:1px;height:3px;background:#e8e8e8;"></div>
<div style="left:270px;top:573px;width:1px;height:3px;background:#e8e8e8;"></div>
<div style="left:282px;top:573px;width:1px;height:3px;background:#e8e8e8;"></div>
<div style="left:293px;top:573px;width:1px;height:3px;background:#e8e8e8;"></div>
<div style="left:304px;top:573px;width:1px;height:3px;background:#e8e8e8;"></div>
<div style="left:315px;top:569px;width:1px;height:8px;background:#d8d8d8;"></div>
<div style="left:327px;top:573px;width:1px;height:3px;background:#e8e8e8;"></div>
<div style="left:338px;top:573px;width:1px;height:3px;background:#e8e8e8;"></div>
<div style="left:349px;top:573px;width:1px;height:3px;background:#e8e8e8;"></div>
<div style="left:360px;top:573px;width:1px;height:3px;background:#e8e8e8;"></div>
<div style="left:372px;top:573px;width:1px;height:3px;background:#e8e8e8;"></div>
<div style="left:383px;top:573px;width:1px;height:3px;background:#e8e8e8;"></div>
<div style="left:394px;top:573px;width:1px;height:3px;background:#e8e8e8;"></div>
<div style="left:405px;top:573px;width:1px;height:3px;background:#e8e8e8;"></div>
<div style="left:417px;top:573px;width:1px;height:3px;background:#e8e8e8;"></div>
<div style="left:428px;top:569px;width:1px;height:8px;background:#d8d8d8;"></div>
<div style="left:439px;top:573px;width:1px;height:3px;background:#e8e8e8;"></div>
<div style="left:450px;top:573px;width:1px;height:3px;background:#e8e8e8;"></div>
<div style="left:461px;top:573px;width:1px;height:3px;background:#e8e8e8;"></div>
<div style="left:473px;top:573px;width:1px;height:3px;background:#e8e8e8;"></div>
<div style="left:484px;top:573px;width:1px;height:3px;background:#e8e8e8;"></div>
<div style="left:495px;top:573px;width:1px;height:3px;background:#e8e8e8;"></div>
<div style="left:506px;top:573px;width:1px;height:3px;background:#e8e8e8;"></div>
<div style="left:518px;top:573px;width:1px;height:3px;background:#e8e8e8;"></div>
<div style="left:529px;top:573px;width:1px;height:3px;background:#e8e8e8;"></div>
<div style="left:540px;top:569px;width:1px;height:8px;background:#d8d8d8;"></div>
<div style="left:551px;top:573px;width:1px;height:3px;background:#e8e8e8;"></div>
<div style="left:563px;top:573px;width:1px;height:3px;background:#e8e8e8;"></div>
<div style="left:574px;top:573px;width:1px;height:3px;background:#e8e8e8;"></div>
<div style="left:585px;top:573px;width:1px;height:3px;background:#e8e8e8;"></div>
<div style="left:596px;top:573px;width:1px;height:3px;background:#e8e8e8;"></div>
<div style="left:608px;top:573px;width:1px;height:3px;background:#e8e8e8;"></div>
<div style="left:619px;top:573px;width:1px;height:3px;background:#e8e8e8;"></div>
<div style="left:630px;top:573px;width:1px;height:3px;background:#e8e8e8;"></div>
<div style="left:641px;top:573px;width:1px;height:3px;background:#e8e8e8;"></div>
<div style="left:653px;top:569px;width:1px;height:8px;background:#d8d8d8;"></div>
<div style="left:664px;top:573px;width:1px;height:3px;background:#e8e8e8;"></div>
<div style="left:675px;top:573px;width:1px;height:3px;background:#e8e8e8;"></div>
<div style="left:686px;top:573px;width:1px;height:3px;background:#e8e8e8;"></div>
<div style="left:698px;top:573px;width:1px;height:3px;background:#e8e8e8;"></div>
<div style="left:709px;top:573px;width:1px;height:3px;background:#e8e8e8;"></div>
<div style="left:720px;top:573px;width:1px;height:3px;background:#e8e8e8;"></div>
<div style="left:731px;top:573px;width:1px;height:3px;background:#e8e8e8;"></div>
<div style="left:742px;top:573px;width:1px;height:3px;background:#e8e8e8;"></div>
<div style="left:754px;top:573px;width:1px;height:3px;background:#e8e8e8;"></div>
<div style="left:765px;top:569px;width:1px;height:8px;background:#d8d8d8;"></div>
<div style="left:776px;top:573px;width:1px;height:3px;background:#e8e8e8;"></div>
<div style="left:787px;top:573px;width:1px;height:3px;background:#e8e8e8;"></div>
<div style="left:799px;top:573px;width:1px;height:3px;background:#e8e8e8;"></div>
<div style="left:810px;top:573px;width:1px;height:3px;background:#e8e8e8;"></div>
<div style="left:821px;top:573px;width:1px;height:3px;background:#e8e8e8;"></div>
<div style="left:832px;top:573px;width:1px;height:3px;background:#e8e8e8;"></div>
<div style="left:844px;top:573px;width:1px;height:3px;background:#e8e8e8;"></div>
<div style="left:855px;top:573px;width:1px;height:3px;background:#e8e8e8;"></div>
<div style="left:866px;top:573px;width:1px;height:3px;background:#e8e8e8;"></div>
<div style="left:877px;top:569px;width:1px;height:8px;background:#d8d8d8;"></div>
<div style="left:889px;top:573px;width:1px;height:3px;background:#e8e8e8;"></div>
<div style="left:900px;top:573px;width:1px;height:3px;background:#e8e8e8;"></div>
<div style="left:911px;top:573px;width:1px;height:3px;background:#e8e8e8;"></div>
<div style="left:922px;top:573px;width:1px;height:3px;background:#e8e8e8;"></div>
<div style="left:934px;top:573px;width:1px;height:3px;background:#e8e8e8;"></div>
<div style="left:945px;top:573px;width:1px;height:3px;background:#e8e8e8;"></div>
<div style="left:956px;top:573px;width:1px;height:3px;background:#e8e8e8;"></div>
<div style="left:967px;top:573px;width:1px;height:3px;background:#e8e8e8;"></div>
<div style="left:979px;top:573px;width:1px;height:3px;background:#e8e8e8;"></div>
<div style="left:990px;top:569px;width:1px;height:8px;background:#d8d8d8;"></div>
<div style="left:1001px;top:573px;width:1px;height:3px;background:#e8e8e8;"></div>
<div style="left:1012px;top:573px;width:1px;height:3px;background:#e8e8e8;"></div>
<div style="left:1023px;top:573px;width:1px;height:3px;background:#e8e8e8;"></div>
<div style="left:1035px;top:573px;width:1px;height:3px;background:#e8e8e8;"></div>
<div style="left:1046px;top:573px;width:1px;height:3px;background:#e8e8e8;"></div>
<div style="left:1057px;top:573px;width:1px;height:3px;background:#e8e8e8;"></div>
<div style="left:1068px;top:573px;width:1px;height:3px;background:#e8e8e8;"></div>
<div style="left:1080px;top:573px;width:1px;height:3px;background:#e8e8e8;"></div>
<div style="left:1091px;top:573px;width:1px;height:3px;background:#e8e8e8;"></div>
<div style="left:1102px;top:569px;width:1px;height:8px;background:#d8d8d8;"></div>
<div style="left:1113px;top:573px;width:1px;height:3px;background:#e8e8e8;"></div>
<div style="left:1125px;top:573px;width:1px;height:3px;background:#e8e8e8;"></div>
<div style="left:1136px;top:573px;width:1px;height:3px;background:#e8e8e8;"></div>
<div style="left:1147px;top:573px;width:1px;height:3px;background:#e8e8e8;"></div>
<div style="left:1158px;top:573px;width:1px;height:3px;background:#e8e8e8;"></div>
<div style="left:1170px;top:573px;width:1px;height:3px;background:#e8e8e8;"></div>
<div style="left:1181px;top:573px;width:1px;height:3px;background:#e8e8e8;"></div>
<div style="left:1192px;top:573px;width:1px;height:3px;background:#e8e8e8;"></div>
<div style="left:1203px;top:573px;width:1px;height:3px;background:#e8e8e8;"></div>
<div style="left:1215px;top:569px;width:1px;height:12px;background:#e0e0e0;"></div>
<div class="t" style="left:103px;top:581.00px;font-size:11px;color:#d8d8d8;">1</div>
<div class="t" style="left:3.4599999999999795px;width:400px;text-align:center;top:581.00px;font-size:11px;color:#d8d8d8;letter-spacing:0.3px">10</div>
<div class="t" style="left:115.86000000000001px;width:400px;text-align:center;top:581.00px;font-size:11px;color:#d8d8d8;letter-spacing:0.3px">20</div>
<div class="t" style="left:228.26px;width:400px;text-align:center;top:581.00px;font-size:11px;color:#d8d8d8;letter-spacing:0.3px">30</div>
<div class="t" style="left:340.65999999999997px;width:400px;text-align:center;top:581.00px;font-size:11px;color:#d8d8d8;letter-spacing:0.3px">40</div>
<div class="t" style="left:453.05999999999995px;width:400px;text-align:center;top:581.00px;font-size:11px;color:#d8d8d8;letter-spacing:0.3px">50</div>
<div class="t" style="left:565.4599999999999px;width:400px;text-align:center;top:581.00px;font-size:11px;color:#d8d8d8;letter-spacing:0.3px">60</div>
<div class="t" style="left:677.86px;width:400px;text-align:center;top:581.00px;font-size:11px;color:#d8d8d8;letter-spacing:0.3px">70</div>
<div class="t" style="left:790.26px;width:400px;text-align:center;top:581.00px;font-size:11px;color:#d8d8d8;letter-spacing:0.3px">80</div>
<div class="t" style="left:902.6600000000001px;width:400px;text-align:center;top:581.00px;font-size:11px;color:#d8d8d8;letter-spacing:0.3px">90</div>
<div class="t" style="left:1015.06px;width:400px;text-align:center;top:581.00px;font-size:11px;color:#d8d8d8;letter-spacing:0.3px">100</div>
<svg style="position:absolute;left:97px;top:566px;" width="12" height="8" viewBox="0 0 12 8"><path d="M0 0.5H12L6 7.5Z" fill="#f7941d"/></svg>
<div class="t" style="left:-94px;width:400px;text-align:center;top:558.00px;font-size:10px;color:#f7941d;">1</div>
<div style="left:1232px;top:559px;width:50px;height:32px;background:#2c2c2c;"></div>
<div class="t" style="left:1057px;width:400px;text-align:center;top:570.00px;font-size:12px;color:#8a8a8a;letter-spacing:0.4px">100</div>
<svg style="position:absolute;left:1287px;top:580px;" width="9" height="12" viewBox="0 0 9 12"><path d="M0.8 0.8L4.5 5L8.2 0.8M0.8 4.8L4.5 9L8.2 4.8" fill="none" stroke="#a0a0a0" stroke-width="1.3"/></svg>
<div style="left:47px;top:595.4px;width:60.5px;height:21px;background:#393939;border:1px solid #222;border-radius:3px"></div>
<div style="left:87px;top:596.4px;width:1px;height:19px;background:#262626;"></div>
<div class="t" style="left:51.3px;top:601.00px;font-size:12px;color:#c8c8c8;letter-spacing:1.2px">24*</div>
<svg style="position:absolute;left:94px;top:604px;" width="7" height="4" viewBox="0 0 7 4"><path d="M0 0H7L3.5 4Z" fill="#9a9a9a"/></svg>
<div class="t" style="left:114px;top:601.00px;font-size:12px;color:#c8c8c8;letter-spacing:-0.5px">TF</div>
<svg style="position:absolute;left:131px;top:603px;" width="6" height="3" viewBox="0 0 6 3"><path d="M0 0H6L3.0 3Z" fill="#9a9a9a"/></svg>
<div style="left:143.5px;top:598px;width:1px;height:18px;background:#1a1a1a;"></div>
<div style="left:144.5px;top:598px;width:1px;height:18px;background:#4a4a4a;"></div>
<div class="t" style="left:151.5px;top:601.00px;font-size:12px;color:#c8c8c8;letter-spacing:0.1px">Global</div>
<svg style="position:absolute;left:200px;top:603px;" width="6" height="3" viewBox="0 0 6 3"><path d="M0 0H6L3.0 3Z" fill="#9a9a9a"/></svg>
<div style="left:212.5px;top:598px;width:1px;height:18px;background:#1a1a1a;"></div>
<div style="left:213.5px;top:598px;width:1px;height:18px;background:#4a4a4a;"></div>
<svg style="position:absolute;left:444px;top:598px;" width="20" height="16" viewBox="0 0 20 16"><path d="M1.5 5H9" stroke="#a8a8a8" stroke-width="2.4"/><path d="M8.3 0.6L13.3 5L8.3 9.4Z" fill="#a8a8a8"/><path d="M3.6 11Q6 14.8 9 14.6Q12 14.3 13.2 10.2" fill="none" stroke="#a8a8a8" stroke-width="1.8"/><path d="M1.2 8.3L6 9.4L2.2 12.8Z" fill="#a8a8a8"/><path d="M14 10.8H19.5L16.75 14Z" fill="#a0a0a0"/></svg>
<div style="left:471.9px;top:594.5px;width:16.200000000000045px;height:22.799999999999955px;background:#4c4c4c;border:1px solid #1f1f1f;border-radius:3px;background:linear-gradient(#545454,#474747)"></div>
<div style="left:489.75px;top:594.5px;width:30.25px;height:22.799999999999955px;background:#4c4c4c;border:1px solid #1f1f1f;border-radius:3px;background:linear-gradient(#545454,#474747)"></div>
<div style="left:521.9px;top:594.5px;width:30.100000000000023px;height:22.799999999999955px;background:#4c4c4c;border:1px solid #1f1f1f;border-radius:3px;background:linear-gradient(#545454,#474747)"></div>
<div style="left:553.75px;top:594.5px;width:30.0px;height:22.799999999999955px;background:#4c4c4c;border:1px solid #1f1f1f;border-radius:3px;background:linear-gradient(#545454,#474747)"></div>
<div style="left:585.6px;top:594.5px;width:30.649999999999977px;height:22.799999999999955px;background:#4c4c4c;border:1px solid #1f1f1f;border-radius:3px;background:linear-gradient(#545454,#474747)"></div>
<div style="left:616.25px;top:595px;width:51.5px;height:22.5px;background:#2e2e2e;"></div>
<div style="left:667.75px;top:594.5px;width:30.350000000000023px;height:22.799999999999955px;background:#4c4c4c;border:1px solid #1f1f1f;border-radius:3px;background:linear-gradient(#545454,#474747)"></div>
<div style="left:699.75px;top:594.5px;width:30.25px;height:22.799999999999955px;background:#4c4c4c;border:1px solid #1f1f1f;border-radius:3px;background:linear-gradient(#545454,#474747)"></div>
<div style="left:731.9px;top:594.5px;width:30.0px;height:22.799999999999955px;background:#4c4c4c;border:1px solid #1f1f1f;border-radius:3px;background:linear-gradient(#545454,#474747)"></div>
<div style="left:763.75px;top:594.5px;width:30.25px;height:22.799999999999955px;background:#4c4c4c;border:1px solid #1f1f1f;border-radius:3px;background:linear-gradient(#545454,#474747)"></div>
<div style="left:795.9px;top:594.5px;width:16.350000000000023px;height:22.799999999999955px;background:#4c4c4c;border:1px solid #1f1f1f;border-radius:3px;background:linear-gradient(#545454,#474747)"></div>
<div style="left:825.6px;top:595.7px;width:20.649999999999977px;height:20.5px;background:#4c4c4c;border:1px solid #1f1f1f;border-radius:3px;background:linear-gradient(#545454,#474747)"></div>
<div style="left:848.5px;top:595.7px;width:21px;height:20.5px;background:#2e2e2e;border:1px solid #242424;border-radius:3px"></div>
<div style="left:871.5px;top:595.7px;width:20.75px;height:20.5px;background:#4c4c4c;border:1px solid #1f1f1f;border-radius:3px;background:linear-gradient(#545454,#474747)"></div>
<svg style="position:absolute;left:430px;top:588px;" width="470" height="36" viewBox="0 0 470 36"><path d="M68.20 12.00L70.80 12.00L70.80 23.20L68.20 23.20Z M81.25 12.00L81.25 23.20L71.25 17.60Z M113.50 14.70L113.50 22.60L105.80 18.65Z M142.50 12.00L142.50 23.20L132.50 17.60Z M142.90 12.00L145.50 12.00L145.50 23.20L142.90 23.20Z M176.25 12.00L176.25 23.20L165.60 17.60Z M247.50 12.00L247.50 23.40L257.75 17.70Z M277.80 12.00L280.40 12.00L280.40 23.20L277.80 23.20Z M281.25 12.00L281.25 23.20L291.25 17.60Z M310.00 14.70L310.00 22.60L318.10 18.65Z M342.50 12.00L342.50 23.20L352.50 17.60Z M352.90 12.00L355.50 12.00L355.50 23.20L352.90 23.20Z M406.20 15.60L406.20 22.50L400.60 19.05Z M411.90 15.60L411.90 22.50L406.30 19.05Z M446.90 15.60L446.90 22.50L452.20 19.05Z M452.20 15.60L452.20 22.50L457.50 19.05Z" fill="#b4b4b4" stroke="#2c2c2c" stroke-width="1.2" stroke-linejoin="round" paint-order="stroke"/><path d="M102.29999999999995 15.5V19" stroke="#b4b4b4" stroke-width="1.4"/><circle cx="102.29999999999995" cy="20.700000000000045" r="1.7" fill="none" stroke="#b4b4b4" stroke-width="1.2"/><path d="M321.9 15.5V19" stroke="#b4b4b4" stroke-width="1.4"/><circle cx="321.9" cy="20.700000000000045" r="1.7" fill="none" stroke="#b4b4b4" stroke-width="1.2"/></svg>
<div class="t" style="left:280px;width:400px;text-align:center;top:602.00px;font-size:12px;color:#d0d0d0;font-family:Liberation Serif">I</div>
<div class="t" style="left:441.5px;width:400px;text-align:center;top:602.00px;font-size:12px;color:#f7941d;">1</div>
<div class="t" style="left:603.8px;width:400px;text-align:center;top:602.00px;font-size:12px;color:#d0d0d0;">O</div>
<div class="t" style="left:658.5px;width:400px;text-align:center;top:602.00px;font-size:12px;color:#c8c8c8;">10</div>
<svg style="position:absolute;left:1148px;top:600px;" width="14" height="12" viewBox="0 0 14 12"><rect width="14" height="12" fill="#a8a8a8"/><path d="M3.5 2.5V9.5L10.5 6Z" fill="#323232"/></svg>
<svg style="position:absolute;left:1170px;top:600px;" width="14" height="12" viewBox="0 0 14 12"><rect width="14" height="12" fill="#a8a8a8"/><circle cx="7" cy="6" r="3.8" fill="#323232"/></svg>
<svg style="position:absolute;left:1192px;top:598px;" width="12" height="14" viewBox="0 0 12 14"><path d="M3 6V4Q3 0.8 6 0.8Q9 0.8 9 4V6" fill="none" stroke="#a8a8a8" stroke-width="1.6"/><rect x="0" y="5.5" width="12" height="8.5" fill="#a8a8a8"/><path d="M6 8.5V12" stroke="#323232" stroke-width="1.2"/><circle cx="6" cy="8.8" r="1" fill="#323232"/></svg>
<svg style="position:absolute;left:1212px;top:598px;" width="15" height="13" viewBox="0 0 15 13"><path d="M6.3 1V6L9.8 3.5Z" fill="#a8a8a8"/><path d="M0.5 7V11.5H14.5V7" fill="none" stroke="#a8a8a8" stroke-width="1"/><path d="M3 9V11.5M5.5 9.5V11.5M8 9.5V11.5M10.5 9.5V11.5M13 9V11.5" stroke="#a8a8a8" stroke-width="1"/></svg>
<div style="left:1232px;top:594px;width:50px;height:24px;background:#2c2c2c;"></div>
<div class="t" style="left:1057px;width:400px;text-align:center;top:602.00px;font-size:12px;color:#d0d0d0;letter-spacing:0.4px">100</div>
<div style="left:44px;top:623px;width:1256px;height:25px;background:#262626;"></div>
<svg style="position:absolute;left:48px;top:627px;" width="16" height="16" viewBox="0 0 16 16"><rect x="0" y="0" width="8" height="8.5" fill="#b6b6b6"/><rect x="0" y="8.5" width="8" height="7.5" fill="#8c8c8c"/><rect x="8" y="0" width="8" height="16" fill="#5c5c5c"/></svg>
<div style="left:68px;top:625px;width:115px;height:23px;background:#323232;border-radius:3px 3px 0 0"></div>
<div class="t" style="left:79.4px;top:631.00px;font-size:12px;color:#c8c8c8;letter-spacing:0.15px">Node Graph</div>
<svg style="position:absolute;left:156px;top:630px;" width="14" height="14" viewBox="0 0 14 14"><circle cx="7" cy="7" r="6.8" fill="#393939"/><path d="M4.4 4.4L9.6 9.6M9.6 4.4L4.4 9.6" stroke="#8c8c8c" stroke-width="1.8"/></svg>
<div style="left:183px;top:626px;width:120px;height:22px;background:#2a2a2a;border-radius:3px 3px 0 0"></div>
<div class="t" style="left:195.2px;top:632.00px;font-size:12px;color:#c8c8c8;letter-spacing:0.4px">Curve Editor</div>
<svg style="position:absolute;left:277px;top:630px;" width="14" height="14" viewBox="0 0 14 14"><circle cx="7" cy="7" r="6.8" fill="#393939"/><path d="M4.4 4.4L9.6 9.6M9.6 4.4L4.4 9.6" stroke="#707070" stroke-width="1.8"/></svg>
<div style="left:304px;top:626px;width:113px;height:22px;background:#2a2a2a;border-radius:3px 3px 0 0"></div>
<div class="t" style="left:315px;top:632.00px;font-size:12px;color:#c8c8c8;letter-spacing:0.4px">Dope Sheet</div>
<svg style="position:absolute;left:391px;top:630px;" width="14" height="14" viewBox="0 0 14 14"><circle cx="7" cy="7" r="6.8" fill="#393939"/><path d="M4.4 4.4L9.6 9.6M9.6 4.4L4.4 9.6" stroke="#707070" stroke-width="1.8"/></svg>
<div style="left:44px;top:648px;width:1256px;height:375px;background:#333333;"></div>
<div style="left:1300px;top:53px;width:1px;height:970px;background:#000;"></div>
<div style="left:1301px;top:53px;width:1px;height:970px;background:#484848;"></div>
<div style="left:1302px;top:53px;width:616px;height:24px;background:#262626;"></div>
<svg style="position:absolute;left:1306px;top:56px;" width="16" height="16" viewBox="0 0 16 16"><rect x="0" y="0" width="8" height="8.5" fill="#b6b6b6"/><rect x="0" y="8.5" width="8" height="7.5" fill="#8c8c8c"/><rect x="8" y="0" width="8" height="16" fill="#5c5c5c"/></svg>
<div style="left:1326px;top:54px;width:105px;height:23px;background:#323232;border-radius:3px 3px 0 0"></div>
<div class="t" style="left:1337.5px;top:60.00px;font-size:12px;color:#c8c8c8;letter-spacing:0.33px">Properties</div>
<svg style="position:absolute;left:1405px;top:58px;" width="14" height="14" viewBox="0 0 14 14"><circle cx="7" cy="7" r="6.8" fill="#393939"/><path d="M4.4 4.4L9.6 9.6M9.6 4.4L4.4 9.6" stroke="#8c8c8c" stroke-width="1.8"/></svg>
<div style="left:1431px;top:55px;width:167px;height:22px;background:#2a2a2a;border-radius:3px 3px 0 0"></div>
<div class="t" style="left:1443.3px;top:61.00px;font-size:12px;color:#c8c8c8;letter-spacing:0.35px">Background Renders</div>
<svg style="position:absolute;left:1572px;top:59px;" width="14" height="14" viewBox="0 0 14 14"><circle cx="7" cy="7" r="6.8" fill="#393939"/><path d="M4.4 4.4L9.6 9.6M9.6 4.4L4.4 9.6" stroke="#707070" stroke-width="1.8"/></svg>
<div style="left:1599px;top:55px;width:120px;height:22px;background:#2a2a2a;border-radius:3px 3px 0 0"></div>
<div class="t" style="left:1610px;top:61.00px;font-size:12px;color:#c8c8c8;letter-spacing:0.3px">Scene Graph</div>
<svg style="position:absolute;left:1694px;top:59px;" width="14" height="14" viewBox="0 0 14 14"><circle cx="7" cy="7" r="6.8" fill="#393939"/><path d="M4.4 4.4L9.6 9.6M9.6 4.4L4.4 9.6" stroke="#707070" stroke-width="1.8"/></svg>
<div style="left:1302px;top:77px;width:616px;height:946px;background:#323232;"></div>
<div style="left:1307.5px;top:83.5px;width:21px;height:19px;background:#393939;border:1px solid #232323;border-radius:2px"></div>
<div class="t" style="left:1118px;width:400px;text-align:center;top:88.00px;font-size:12px;color:#c8c8c8;letter-spacing:0.2px">10</div>
<svg style="position:absolute;left:1334px;top:86px;" width="15" height="14" viewBox="0 0 15 14"><path d="M8.5 5.5V4Q8.5 1 11.2 1Q13.9 1 13.9 4V5" fill="none" stroke="#000" stroke-width="1.5"/><rect x="0" y="5.5" width="11" height="8.5" fill="#000"/><path d="M5.5 8.5V12" stroke="#888" stroke-width="0.8"/></svg>
<svg style="position:absolute;left:1354px;top:88px;" width="13" height="10" viewBox="0 0 13 10"><rect x="0.5" y="1" width="5" height="1.6" fill="#a0a0a0"/><rect x="0.5" y="4.2" width="5" height="1.6" fill="#a0a0a0"/><rect x="0.5" y="7.4" width="5" height="1.6" fill="#a0a0a0"/><path d="M5.5 1L11.5 9M11.5 1L5.5 9" stroke="#b8b8b8" stroke-width="2"/></svg>
<svg style="position:absolute;left:1376.5px;top:85.5px;" width="14" height="16" viewBox="0 0 14 16"><path d="M0.4 12L0.6 9L8.2 0.5Q9.2 -0.3 10.2 0.4L12.5 2.3Q13.2 3.2 12.5 4L3.9 11.3Z" fill="#cdcdcd"/><path d="M1.6 7.9L4.9 10.8M7.1 1.6L10.6 4.6" stroke="#2a2a2a" stroke-width="0.9"/><rect x="0.5" y="14.3" width="10.5" height="1.3" fill="#d8d8d8"/></svg>
<div style="left:1392px;top:85px;width:1px;height:15px;background:#1a1a1a;"></div>
<div style="left:1393px;top:85px;width:1px;height:15px;background:#4a4a4a;"></div>
<div style="left:1902px;top:109px;width:14px;height:912px;background:#1c1c1c;border-radius:3px"></div>
<div style="left:1903px;top:110px;width:12px;height:12px;background:#474747;border-radius:2px"></div>
<svg style="position:absolute;left:1904.5px;top:112.5px;" width="9" height="5" viewBox="0 0 9 5"><path d="M0 5H9L4.5 0Z" fill="#d0d0d0"/></svg>
<div style="left:1903px;top:124px;width:12px;height:869px;background:#505050;border-radius:1px"></div>
<div style="left:1904.5px;top:549.5px;width:2px;height:2px;background:#2c2c2c;"></div>
<div style="left:1908.5px;top:549.5px;width:2px;height:2px;background:#2c2c2c;"></div>
<div style="left:1912.5px;top:549.5px;width:2px;height:2px;background:#2c2c2c;"></div>
<div style="left:1904.5px;top:553.5px;width:2px;height:2px;background:#2c2c2c;"></div>
<div style="left:1908.5px;top:553.5px;width:2px;height:2px;background:#2c2c2c;"></div>
<div style="left:1912.5px;top:553.5px;width:2px;height:2px;background:#2c2c2c;"></div>
<div style="left:1904.5px;top:557.5px;width:2px;height:2px;background:#2c2c2c;"></div>
<div style="left:1908.5px;top:557.5px;width:2px;height:2px;background:#2c2c2c;"></div>
<div style="left:1912.5px;top:557.5px;width:2px;height:2px;background:#2c2c2c;"></div>
<div style="left:1904.5px;top:561.5px;width:2px;height:2px;background:#2c2c2c;"></div>
<div style="left:1908.5px;top:561.5px;width:2px;height:2px;background:#2c2c2c;"></div>
<div style="left:1912.5px;top:561.5px;width:2px;height:2px;background:#2c2c2c;"></div>
<div style="left:1904.5px;top:565.5px;width:2px;height:2px;background:#2c2c2c;"></div>
<div style="left:1908.5px;top:565.5px;width:2px;height:2px;background:#2c2c2c;"></div>
<div style="left:1912.5px;top:565.5px;width:2px;height:2px;background:#2c2c2c;"></div>
<div style="left:1903px;top:994px;width:12px;height:12px;background:#474747;border-radius:2px"></div>
<svg style="position:absolute;left:1904.5px;top:997.5px;" width="9" height="5" viewBox="0 0 9 5"><path d="M0 5H9L4.5 0Z" fill="#d0d0d0"/></svg>
<div style="left:1903px;top:1007.5px;width:12px;height:12.5px;background:#474747;border-radius:2px"></div>
<svg style="position:absolute;left:1904.5px;top:1011px;" width="9" height="5" viewBox="0 0 9 5"><path d="M0 0H9L4.5 5Z" fill="#d0d0d0"/></svg>
<svg style="position:absolute;left:630px;top:794px;" width="86" height="52" viewBox="0 0 86 52"><rect x="18.7" y="2" width="3" height="1.2" fill="#f5a84a"/><rect x="21" y="6" width="3" height="1.2" fill="#f5a84a"/><rect x="23.5" y="10" width="3" height="1.2" fill="#f5a84a"/><rect x="26" y="14.2" width="2.8" height="1.2" fill="#f5a84a"/><path d="M28.8 24L34.8 19.6L37 32Z" fill="#f7b35a"/><path d="M4.5 32.5H80.5L83.5 41L80.5 49.5H4.5L1.5 41Z" fill="#b8b8b8"/><path d="M5.5 34H79.5L82 41L79.5 48H5.5L3 41Z" fill="#ffb961"/><path d="M4.5 32.5H80.5L81.2 34.5H3.8Z" fill="#e6e6e6"/><path d="M3.8 47.5H81.2L80.5 49.5H4.5Z" fill="#8a8a8a"/></svg>
<div class="t" style="left:459px;width:400px;text-align:center;top:811.00px;font-size:9px;color:#cfe6f5;">1</div>
<div class="t" style="left:472px;width:400px;text-align:center;top:832.00px;font-size:11px;color:#000;letter-spacing:0.1px">Viewer1</div>
<div style="left:1px;top:1023px;width:1917px;height:16px;background:#323232;"></div>
<div class="t" style="left:1209.2px;top:1026.00px;font-size:12px;color:#d0d0d0;letter-spacing:0.45px">Channel Count: 22</div>
<div class="t" style="left:1323px;top:1026.00px;font-size:12px;color:#d0d0d0;letter-spacing:0.26px">Localization Mode: On</div>
<div class="t" style="left:1454.5px;top:1026.00px;font-size:12px;color:#d0d0d0;letter-spacing:0.56px">Memory: 0.4 GB (2.4%)</div>
<div class="t" style="left:1596.3px;top:1026.00px;font-size:12px;color:#d0d0d0;letter-spacing:0.38px">CPU: 23.4%</div>
<div class="t" style="left:1670.7px;top:1026.00px;font-size:12px;color:#d0d0d0;letter-spacing:0.48px">Disk: 0.0 MB/s</div>
<div class="t" style="left:1758.2px;top:1026.00px;font-size:12px;color:#d0d0d0;letter-spacing:0.49px">Network: 0.0 MB/s</div>
<div style="left:1915px;top:1027px;width:2px;height:2px;background:#5c5c5c;"></div>
<div style="left:1915px;top:1030px;width:2px;height:2px;background:#5c5c5c;"></div>
<div style="left:1912px;top:1030px;width:2px;height:2px;background:#5c5c5c;"></div>
<div style="left:1915px;top:1033px;width:2px;height:2px;background:#5c5c5c;"></div>
<div style="left:1912px;top:1033px;width:2px;height:2px;background:#5c5c5c;"></div>
<div style="left:1909px;top:1033px;width:2px;height:2px;background:#5c5c5c;"></div>
<div style="left:1915px;top:1036px;width:2px;height:2px;background:#5c5c5c;"></div>
<div style="left:1912px;top:1036px;width:2px;height:2px;background:#5c5c5c;"></div>
<div style="left:1909px;top:1036px;width:2px;height:2px;background:#5c5c5c;"></div>
<div style="left:1906px;top:1036px;width:2px;height:2px;background:#5c5c5c;"></div>
<div style="left:1870px;top:1026px;width:24px;height:10px;background:#3cb54a;border-radius:1px"></div>
<div class="t" style="left:1682px;width:400px;text-align:center;top:1027.00px;font-size:9px;color:#1d5a22;">OK</div>
</body></html>
